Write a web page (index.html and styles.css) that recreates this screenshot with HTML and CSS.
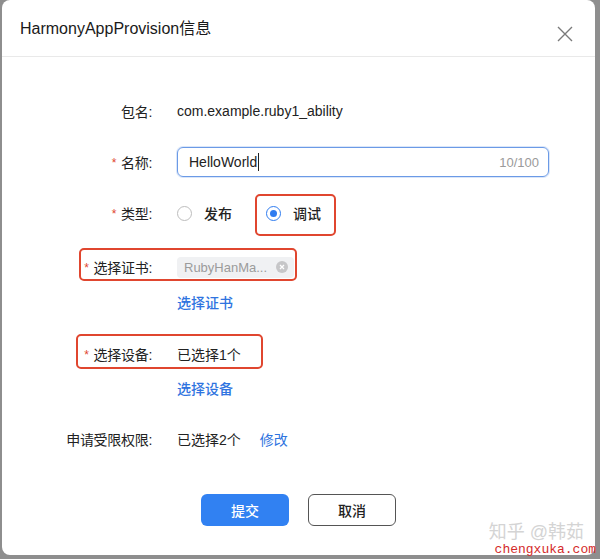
FILE: index.html
```html
<!DOCTYPE html>
<html lang="zh-CN">
<head>
    <meta charset="UTF-8">
    <meta name="viewport" content="width=device-width, initial-scale=1.0">
    <title>HarmonyAppProvision信息</title>
    <link rel="stylesheet" href="styles.css">
</head>
<body>
    <div class="dialog">
        <div class="dialog-header">
            <h1>HarmonyAppProvision信息</h1>
            <svg class="close" width="16" height="16" viewBox="0 0 16 16">
                <path d="M1 1L15 15M15 1L1 15" stroke="#7a7a7a" stroke-width="1.4" fill="none"/>
            </svg>
        </div>

        <div class="dialog-body">
            <div class="row row-pkg">
                <div class="label">包名:</div>
                <div class="value">com.example.ruby1_ability</div>
            </div>

            <div class="row row-name">
                <div class="label"><span class="req">*</span>名称:</div>
                <div class="input">
                    <span class="input-text">HelloWorld<span class="caret"></span></span>
                    <span class="count">10/100</span>
                </div>
            </div>

            <div class="row row-type">
                <div class="label"><span class="req">*</span>类型:</div>
                <div class="radios">
                    <label class="radio"><span class="dot"></span>发布</label>
                    <label class="radio checked"><span class="dot"></span>调试</label>
                    <span class="mark mark-type"></span>
                </div>
            </div>

            <div class="row row-cert">
                <div class="label"><span class="req">*</span>选择证书:</div>
                <div class="value">
                    <span class="tag">RubyHanMa...
                        <svg class="tag-close" width="12" height="12" viewBox="0 0 12 12">
                            <circle cx="6" cy="6" r="6" fill="#c6c6c8"/>
                            <path d="M4 4L8 8M8 4L4 8" stroke="#fff" stroke-width="1.3"/>
                        </svg>
                    </span>
                </div>
                <span class="mark mark-cert"></span>
            </div>
            <div class="row-link"><a class="link">选择证书</a></div>

            <div class="row row-device">
                <div class="label"><span class="req">*</span>选择设备:</div>
                <div class="value">已选择1个</div>
                <span class="mark mark-device"></span>
            </div>
            <div class="row-link"><a class="link">选择设备</a></div>

            <div class="row row-perm">
                <div class="label">申请受限权限:</div>
                <div class="value">已选择2个<a class="link link-edit">修改</a></div>
            </div>
        </div>

        <div class="dialog-footer">
            <button class="btn btn-primary">提交</button>
            <button class="btn btn-default">取消</button>
        </div>
    </div>

    <div class="watermark">
        <span class="wm-zhihu">知乎 @韩茹</span>
        <span class="wm-site">chengxuka.com</span>
    </div>
</body>
</html>
```

FILE: styles.css
```css
body {
    margin: 0;
    width: 600px;
    height: 559px;
    background-color: #8e8e8e;
    font-family: 'Liberation Sans', Arial, 'Noto Sans CJK SC', sans-serif;
    color: #222;
    position: relative;
    overflow: hidden;
}
.dialog {
    margin-left: 2px;
    width: 593px;
    height: 555px;
    background-color: #fff;
    border-radius: 8px;
    position: relative;
}
.dialog-header {
    height: 56px;
    border-bottom: 1px solid #e9e9e9;
    display: flex;
    align-items: center;
    justify-content: space-between;
    padding: 0 22px 0 18px;
}
.dialog-header h1 {
    margin: 0;
    font-size: 16px;
    font-weight: normal;
    color: #1a1a1a;
    margin-top: -3px;
}
.close {
    margin-top: 11px;
}
.dialog-body {
    padding-top: 38px;
}
.row {
    display: flex;
    align-items: center;
    height: 32px;
    font-size: 14px;
    position: relative;
}
.label {
    width: 150px;
    text-align: right;
    color: #222;
    flex-shrink: 0;
    margin-right: 25px;
    letter-spacing: -0.3px;
}
.req {
    color: #e0462f;
    font-size: 12px;
    margin-right: 5px;
    position: relative;
    top: -1px;
}
.row-pkg, .row-name {
    margin-bottom: 19px;
}
.row-type {
    margin-bottom: 22px;
}
.input {
    width: 372px;
    height: 30px;
    border: 1px solid #6b9ae6;
    border-radius: 6px;
    display: flex;
    align-items: center;
    justify-content: space-between;
    padding: 0 9px 0 11px;
    box-sizing: border-box;
    box-shadow: 0 0 0 1px rgba(107, 154, 230, 0.25);
}
.input-text {
    display: flex;
    align-items: center;
}
.caret {
    display: inline-block;
    width: 1px;
    height: 18px;
    background: #222;
    margin-left: 1px;
}
.count {
    color: #9a9a9a;
    font-size: 13px;
}
.radios {
    display: flex;
    align-items: center;
    position: relative;
}
.radio {
    display: flex;
    align-items: center;
    margin-right: 34px;
    font-weight: 500;
}
.radio .dot {
    width: 13px;
    height: 13px;
    border: 1px solid #bdbdbd;
    border-radius: 50%;
    margin-right: 12px;
    box-sizing: content-box;
    position: relative;
}
.radio.checked .dot {
    border-color: #2f7cf0;
}
.radio.checked .dot::after {
    content: "";
    position: absolute;
    left: 3px;
    top: 3px;
    width: 7px;
    height: 7px;
    border-radius: 50%;
    background: #2f7cf0;
}
/* red annotation frames */
.mark {
    position: absolute;
    border: 2px solid #e0462f;
    border-radius: 5px;
}
.mark-type {
    left: 78px;
    top: -9px;
    width: 77px;
    height: 38px;
}
.mark-cert {
    left: 77px;
    top: -3px;
    width: 214px;
    height: 29px;
}
.mark-device {
    left: 74px;
    top: -3px;
    width: 183px;
    height: 31px;
}
.tag {
    display: inline-flex;
    align-items: center;
    height: 21px;
    padding: 0 6px 0 7px;
    background: #f0f1f3;
    border-radius: 4px;
    color: #9b9b9b;
    font-size: 13px;
}
.tag-close {
    margin-left: 9px;
}
.row-link {
    padding-left: 175px;
    height: 20px;
    display: flex;
    align-items: center;
    margin-top: 9px;
    margin-bottom: 25px;
}
.row-device {
    height: 34px;
}
.row-device + .row-link {
    margin-top: 7px;
}
.link {
    color: #2f74e0;
    font-size: 14px;
    font-weight: 500;
}
.link-edit {
    font-weight: normal;
    margin-left: 19px;
}
.dialog-footer {
    margin-top: 39px;
    padding-left: 199px;
    display: flex;
    gap: 19px;
}
.btn {
    width: 88px;
    height: 32px;
    border-radius: 6px;
    font-size: 14px;
    font-weight: 500;
    font-family: inherit;
    cursor: pointer;
}
.btn-primary {
    background-color: #3181f2;
    border: none;
    color: #fff;
}
.btn-default {
    background-color: #fff;
    border: 1px solid #555;
    color: #222;
}
.watermark {
    position: absolute;
    right: 4px;
    bottom: 3px;
    display: flex;
    flex-direction: column;
    align-items: flex-end;
    line-height: 1;
}
.wm-zhihu {
    font-size: 18px;
    color: #d4d4d4;
    margin-right: 12px;
    margin-bottom: 2px;
}
.wm-site {
    font-family: 'Liberation Mono', monospace;
    font-size: 13px;
    color: #d42a2a;
}
```
